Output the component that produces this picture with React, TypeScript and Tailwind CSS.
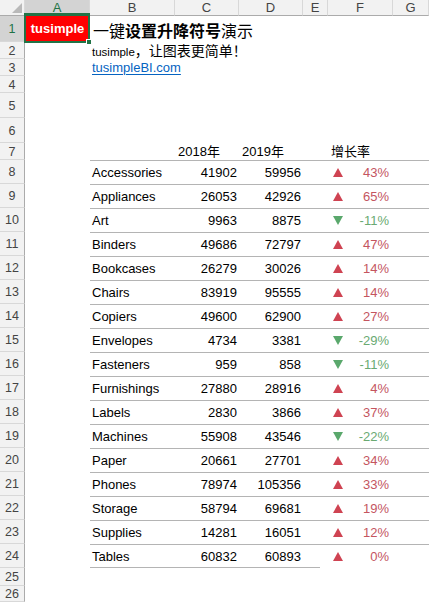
import React from 'react';

type Item = [string, number, number, number];

const data: Item[] = [
  ['Accessories', 41902, 59956, 43],
  ['Appliances', 26053, 42926, 65],
  ['Art', 9963, 8875, -11],
  ['Binders', 49686, 72797, 47],
  ['Bookcases', 26279, 30026, 14],
  ['Chairs', 83919, 95555, 14],
  ['Copiers', 49600, 62900, 27],
  ['Envelopes', 4734, 3381, -29],
  ['Fasteners', 959, 858, -11],
  ['Furnishings', 27880, 28916, 4],
  ['Labels', 2830, 3866, 37],
  ['Machines', 55908, 43546, -22],
  ['Paper', 20661, 27701, 34],
  ['Phones', 78974, 105356, 33],
  ['Storage', 58794, 69681, 19],
  ['Supplies', 14281, 16051, 12],
  ['Tables', 60832, 60893, 0],
];

const hCls: Record<number, string> = {
  16: 'h-[16px]',
  17: 'h-[17px]',
  18: 'h-[18px]',
  24: 'h-[24px]',
  25: 'h-[25px]',
  26: 'h-[26px]',
};

const LINE = 'border-[#b4b4b4]';

function RowHead({ n, sel }: { n: number; sel?: boolean }) {
  return (
    <div
      className={`w-[25px] shrink-0 flex items-center justify-center text-[12.5px] border-b border-b-[#d8d8d8] border-r ${
        sel ? 'bg-[#d3d3d3] text-[#217346] border-r-[#217346]' : 'bg-[#f2f2f2] text-[#444] border-r-[#ababab]'
      }`}
    >
      <span className="pt-[2px]">{n}</span>
    </div>
  );
}

function Row({ h, n, sel, children }: { h: number; n: number; sel?: boolean; children?: React.ReactNode }) {
  return (
    <div className={`flex ${hCls[h]}`}>
      <RowHead n={n} sel={sel} />
      {children}
    </div>
  );
}

function EmptyCells() {
  return null;
}

function Tri({ up }: { up: boolean }) {
  return up ? (
    <svg width="10" height="9" viewBox="0 0 10 9" className="shrink-0">
      <polygon points="0,9 5,0 10,9" fill="#cf4352" />
    </svg>
  ) : (
    <svg width="10" height="9" viewBox="0 0 10 9" className="shrink-0">
      <polygon points="0,0 10,0 5,9" fill="#5aa86c" />
    </svg>
  );
}

function DataRow({ item, n, last }: { item: Item; n: number; last: boolean }) {
  const [name, a, b, p] = item;
  const up = p >= 0;
  const bb = last ? 'border-b' : '';
  return (
    <Row h={24} n={n}>
      <div className="w-[65px] shrink-0" />
      <div className={`w-[85px] shrink-0 border-t ${bb} ${LINE} flex items-center pl-[2px]`}>{name}</div>
      <div className={`w-[64px] shrink-0 border-t ${bb} ${LINE} flex items-center justify-end pr-[2px]`}>{a}</div>
      <div className={`w-[64px] shrink-0 border-t ${bb} ${LINE} flex items-center justify-end pr-[2px]`}>{b}</div>
      <div className={`w-[25px] shrink-0 border-t ${LINE} flex flex-col justify-end`}>
        {last && <div className="h-px w-[17px] bg-[#b4b4b4]" />}
      </div>
      <div className={`w-[65px] shrink-0 border-t ${LINE} flex items-center pl-[5px] pr-[4px]`}>
        <Tri up={up} />
        <span className={`flex-1 text-right ${up ? 'text-[#c4555f]' : 'text-[#6aaa72]'}`}>{p}%</span>
      </div>
      <div className={`flex-1 border-t ${LINE}`} />
    </Row>
  );
}

export default function App() {
  const cols: [string, string][] = [
    ['A', 'w-[65px]'],
    ['B', 'w-[85px]'],
    ['C', 'w-[64px]'],
    ['D', 'w-[64px]'],
    ['E', 'w-[25px]'],
    ['F', 'w-[65px]'],
    ['G', 'flex-1'],
  ];
  return (
    <div className="w-[429px] h-[602px] overflow-hidden bg-white text-black font-['Liberation_Sans','Noto_Sans_CJK_SC',sans-serif] text-[13px] leading-none">
      {/* column headers */}
      <div className="flex h-[16px]">
        <div className="w-[25px] shrink-0 bg-[#f2f2f2] border-r border-b border-r-[#d8d8d8] border-b-[#ababab] flex items-end justify-end pr-[2px] pb-[2px]">
          <svg width="10" height="10" viewBox="0 0 10 10">
            <polygon points="10,0 10,10 0,10" fill="#b9b9b9" />
          </svg>
        </div>
        {cols.map(([c, w], i) => (
          <div
            key={c}
            className={`${w} shrink-0 flex items-center justify-center text-[13px] border-r border-r-[#d8d8d8] border-b ${
              i === 0 ? 'bg-[#d3d3d3] text-[#217346] border-b-[#217346]' : 'bg-[#f2f2f2] text-[#444] border-b-[#ababab]'
            }`}
          >
            {c}
          </div>
        ))}
      </div>

      {/* row 1 */}
      <Row h={26} n={1} sel>
        <div className="relative w-[65px] shrink-0 bg-[#ff0000] flex items-center justify-center">
          <span className="text-white font-bold text-[13px] pb-[1px]">tusimple</span>
          <div className="absolute -left-[1px] -top-[3px] right-0 -bottom-[1px] border-2 border-[#217346] pointer-events-none" />
          <div className="absolute -right-[2px] -bottom-[3px] w-[6px] h-[6px] bg-[#217346] border border-white" />
        </div>
        <div className="w-[85px] shrink-0 flex items-center pl-[3px] overflow-visible">
          <span className="whitespace-nowrap text-[16px] font-['Noto_Sans_CJK_SC',sans-serif] pt-[2px]">
            一键<span className="font-bold">设置升降符号</span>演示
          </span>
        </div>
        <EmptyCells />
      </Row>

      {/* row 2 */}
      <Row h={17} n={2}>
        <div className="w-[65px] shrink-0" />
        <div className="w-[85px] shrink-0 flex items-center pl-[2px]">
          <span className="whitespace-nowrap">
            <span className="text-[11.5px]">tusimple</span>
            <span className="text-[14px] font-['Noto_Sans_CJK_SC',sans-serif]">，让图表更简单！</span>
          </span>
        </div>
      </Row>

      {/* row 3 */}
      <Row h={17} n={3}>
        <div className="w-[65px] shrink-0" />
        <div className="w-[85px] shrink-0 flex items-center pl-[2px]">
          <span className="whitespace-nowrap text-[#0563c1] underline underline-offset-2">tusimpleBI.com</span>
        </div>
      </Row>

      <Row h={17} n={4} />
      <Row h={25} n={5} />
      <Row h={25} n={6} />

      {/* row 7 headers */}
      <Row h={17} n={7}>
        <div className="w-[65px] shrink-0" />
        <div className="w-[85px] shrink-0" />
        <div className="w-[64px] shrink-0 flex items-center pl-[3px] whitespace-nowrap">2018年</div>
        <div className="w-[64px] shrink-0 flex items-center pl-[3px] whitespace-nowrap">2019年</div>
        <div className="w-[25px] shrink-0" />
        <div className="w-[65px] shrink-0 flex items-center pl-[3px] whitespace-nowrap">增长率</div>
      </Row>

      {data.map((it, i) => (
        <DataRow key={it[0]} item={it} n={8 + i} last={i === data.length - 1} />
      ))}

      <Row h={18} n={25} />
      <Row h={16} n={26} />
    </div>
  );
}
